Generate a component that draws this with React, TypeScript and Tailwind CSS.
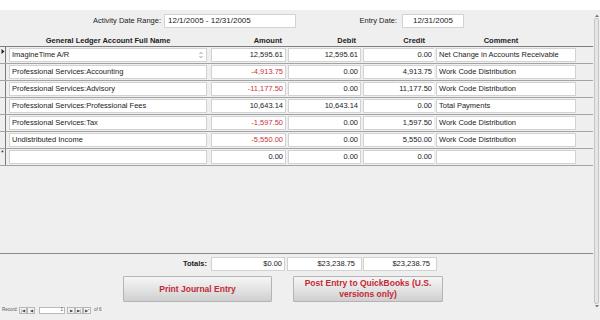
import React from 'react'

type Row = { name: string; amount: string; debit: string; credit: string; comment: string; neg?: boolean }

const ROWS: Row[] = [
  { name: 'ImagineTime A/R', amount: '12,595.61', debit: '12,595.61', credit: '0.00', comment: 'Net Change in Accounts Receivable' },
  { name: 'Professional Services:Accounting', amount: '-4,913.75', debit: '0.00', credit: '4,913.75', comment: 'Work Code Distribution', neg: true },
  { name: 'Professional Services:Advisory', amount: '-11,177.50', debit: '0.00', credit: '11,177.50', comment: 'Work Code Distribution', neg: true },
  { name: 'Professional Services:Professional Fees', amount: '10,643.14', debit: '10,643.14', credit: '0.00', comment: 'Total Payments' },
  { name: 'Professional Services:Tax', amount: '-1,597.50', debit: '0.00', credit: '1,597.50', comment: 'Work Code Distribution', neg: true },
  { name: 'Undistributed Income', amount: '-5,550.00', debit: '0.00', credit: '5,550.00', comment: 'Work Code Distribution', neg: true },
]

const box = 'h-[14px] bg-white border border-[#d2d2d2] px-[2px] flex items-center whitespace-nowrap overflow-hidden leading-none'

function Spinner() {
  return (
    <svg width="4" height="8" viewBox="0 0 4 8" className="ml-auto mr-[1px]">
      <path d="M0.5 3 L2 1.3 L3.5 3" fill="none" stroke="#888" strokeWidth="0.8" />
      <path d="M0.5 5 L2 6.7 L3.5 5" fill="none" stroke="#888" strokeWidth="0.8" />
    </svg>
  )
}

function DetailRow({ r, marker }: { r: Row | null; marker?: string }) {
  return (
    <div className="h-[17px] flex items-center border-b border-[#a3a3a3]">
      <div className="w-[6px] self-stretch border-r border-[#7a7a7a] relative">
        {marker === 'cur' && (
          <svg width="4" height="5" viewBox="0 0 4 5" className="absolute left-[1px] top-[2px]">
            <path d="M0.5 0 L3.5 2.5 L0.5 5 Z" fill="#222" />
          </svg>
        )}
        {marker === 'new' && <span className="absolute left-[1px] top-[0px] text-[7px] leading-none">*</span>}
      </div>
      <div className={`${box} ml-[3px] w-[198px]`}>
        {r?.name}
        {marker === 'cur' && <Spinner />}
      </div>
      <div className={`${box} ml-[4px] w-[75px] justify-end ${r?.neg ? 'text-[#cc3340]' : ''}`}>{r ? r.amount : '0.00'}</div>
      <div className={`${box} ml-[2px] w-[73px] justify-end`}>{r ? r.debit : '0.00'}</div>
      <div className={`${box} ml-[2px] w-[71px] justify-end border-r-0`}>{r ? r.credit : '0.00'}</div>
      <div className={`${box} ml-[2px] w-[140px]`}>{r?.comment}</div>
    </div>
  )
}

function NavBtn({ children }: { children: React.ReactNode }) {
  return (
    <div className="w-[8px] h-[7px] border border-[#b8b8b8] bg-[#f4f4f4] flex items-center justify-center text-[4px] leading-none text-[#444]">
      {children}
    </div>
  )
}

export default function App() {
  return (
    <div className="w-[600px] h-[320px] overflow-hidden bg-[#efefef] font-['Liberation_Sans',Arial,sans-serif] text-[7.5px] text-[#222] flex flex-col">
      <div className="h-[10px] bg-white shrink-0" />
      <div className="flex flex-1">
        {/* main form */}
        <div className="w-[593px] flex flex-col">
          {/* date range */}
          <div className="mt-[5px] h-[12px] flex items-center">
            <div className="w-[161px] text-right">Activity Date Range:</div>
            <div className={`${box} h-[12px] ml-[3px] w-[132px] text-[8px] pl-[3px]`}>12/1/2005 - 12/31/2005</div>
            <div className="w-[101px] text-right">Entry Date:</div>
            <div className={`${box} h-[12px] ml-[5px] w-[62px] text-[8px] justify-center`}>12/31/2005</div>
          </div>

          {/* column headers */}
          <div className="mt-[9px] h-[10px] flex items-center font-bold leading-none">
            <div className="w-[6px]" />
            <div className="ml-[3px] w-[198px] text-center">General Ledger Account Full Name</div>
            <div className="ml-[4px] w-[75px] text-right pr-[4px]">Amount</div>
            <div className="ml-[2px] w-[73px] text-right pr-[5px]">Debit</div>
            <div className="ml-[2px] w-[71px] text-right pr-[9px]">Credit</div>
            <div className="ml-[2px] w-[140px] text-center pr-[10px]">Comment</div>
          </div>

          {/* detail rows */}
          <div className="border-t border-[#7e7e7e]">
            {ROWS.map((r, i) => (
              <DetailRow key={r.name} r={r} marker={i === 0 ? 'cur' : undefined} />
            ))}
            <DetailRow r={null} marker="new" />
          </div>

          <div className="h-[88px] border-b border-[#8a8a8a]" />

          {/* totals */}
          <div className="mt-[3px] h-[14px] flex items-center">
            <div className="w-[207px] text-right font-bold">Totals:</div>
            <div className={`${box} ml-[4px] w-[74px] justify-end`}>$0.00</div>
            <div className={`${box} ml-[2px] w-[75px] justify-end pr-[6px]`}>$23,238.75</div>
            <div className={`${box} ml-[1px] w-[74px] justify-end pr-[6px]`}>$23,238.75</div>
          </div>

          {/* buttons */}
          <div className="mt-[5px] h-[26px] flex">
            <button className="ml-[123px] w-[149px] h-full border border-[#b4b4b4] rounded-[1px] bg-gradient-to-b from-[#f6f6f6] via-[#e4e4e4] to-[#cfcfcf] text-[#c42a36] font-bold text-[8.5px] leading-[11px]">
              Print Journal Entry
            </button>
            <button className="ml-[21px] w-[150px] h-full border border-[#b4b4b4] rounded-[1px] bg-gradient-to-b from-[#f6f6f6] via-[#e4e4e4] to-[#cfcfcf] text-[#c42a36] font-bold text-[8.5px] leading-[11px] px-[2px]">
              Post Entry to QuickBooks (U.S. versions only)
            </button>
          </div>

          {/* record navigator */}
          <div className="mt-[5px] h-[7px] flex items-center text-[4.5px] leading-none text-[#555]">
            <span className="ml-[2px] w-[17px]">Record:</span>
            <NavBtn>|◀</NavBtn>
            <NavBtn>◀</NavBtn>
            <div className="ml-[4px] w-[26px] h-[7px] bg-white border border-[#b8b8b8] flex items-center justify-end pr-[1px]">1</div>
            <div className="ml-[2px] flex">
              <NavBtn>▶</NavBtn>
              <NavBtn>▶|</NavBtn>
              <NavBtn>▶*</NavBtn>
            </div>
            <span className="ml-[3px]">of 6</span>
          </div>
        </div>

        {/* scrollbar */}
        <div className="w-[7px] flex flex-col items-center pt-[4px] pb-[12px]">
          <svg width="4" height="3" viewBox="0 0 4 3">
            <path d="M0 3 L2 0.5 L4 3 Z" fill="#777" />
          </svg>
          <div className="flex-1 w-[5px] mt-[1px] mb-[1px] border border-[#c4c4c4] rounded-[2px] bg-[#e6e6e6]" />
          <svg width="4" height="3" viewBox="0 0 4 3">
            <path d="M0 0 L2 2.5 L4 0 Z" fill="#777" />
          </svg>
        </div>
      </div>
    </div>
  )
}
